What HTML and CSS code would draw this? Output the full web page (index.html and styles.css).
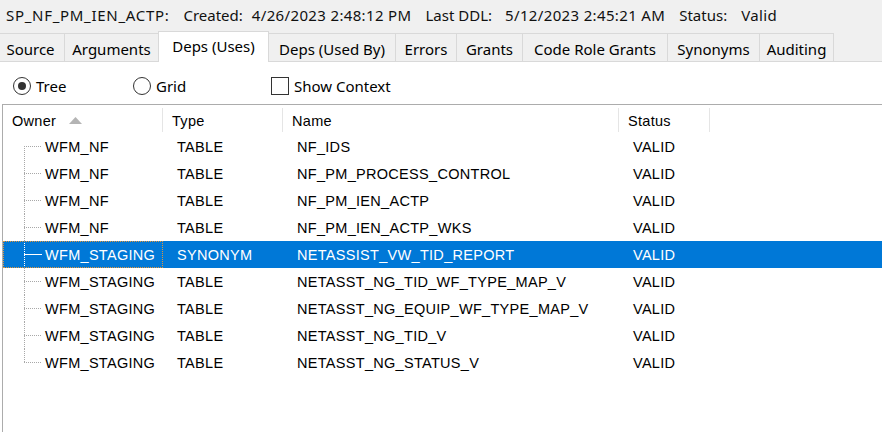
FILE: index.html
```html
<!DOCTYPE html>
<html>
<head>
<meta charset="utf-8">
<title>Deps</title>
<link rel="stylesheet" href="styles.css">
</head>
<body>
<div class="window">
  <div class="info">
    <span class="obj">SP_NF_PM_IEN_ACTP:</span>
    <span class="lbl lbl-created">Created:</span><span class="val">4/26/2023 2:48:12 PM</span>
    <span class="lbl lbl-ddl">Last DDL:</span><span class="val">5/12/2023 2:45:21 AM</span>
    <span class="lbl">Status:</span><span class="val">Valid</span>
  </div>
  <div class="tabs">
    <div class="tab t-source">Source</div>
    <div class="tab t-args">Arguments</div>
    <div class="tab t-uses active">Deps (Uses)</div>
    <div class="tab t-usedby">Deps (Used By)</div>
    <div class="tab t-errors">Errors</div>
    <div class="tab t-grants">Grants</div>
    <div class="tab t-crg">Code Role Grants</div>
    <div class="tab t-syn">Synonyms</div>
    <div class="tab t-aud">Auditing</div>
  </div>
  <div class="panel">
    <div class="options">
      <label class="opt opt-tree"><span class="radio checked"></span>Tree</label>
      <label class="opt opt-grid"><span class="radio"></span>Grid</label>
      <label class="opt"><span class="check"></span>Show Context</label>
    </div>
    <div class="grid">
      <div class="row head">
        <div class="c c-owner">Owner<svg class="sort" width="13" height="7" viewBox="0 0 13 7"><polygon points="0,7 6.5,0 13,7" fill="#b4b4b4"/></svg></div>
        <div class="c c-type">Type</div>
        <div class="c c-name">Name</div>
        <div class="c c-status">Status</div>
        <div class="c c-fill"></div>
      </div>
      <div class="row">
        <div class="c c-owner"><span class="tree first"></span><span class="txt">WFM_NF</span></div>
        <div class="c c-type">TABLE</div><div class="c c-name">NF_IDS</div><div class="c c-status">VALID</div><div class="c c-fill"></div>
      </div>
      <div class="row">
        <div class="c c-owner"><span class="tree"></span><span class="txt">WFM_NF</span></div>
        <div class="c c-type">TABLE</div><div class="c c-name">NF_PM_PROCESS_CONTROL</div><div class="c c-status">VALID</div><div class="c c-fill"></div>
      </div>
      <div class="row">
        <div class="c c-owner"><span class="tree"></span><span class="txt">WFM_NF</span></div>
        <div class="c c-type">TABLE</div><div class="c c-name">NF_PM_IEN_ACTP</div><div class="c c-status">VALID</div><div class="c c-fill"></div>
      </div>
      <div class="row">
        <div class="c c-owner"><span class="tree"></span><span class="txt">WFM_NF</span></div>
        <div class="c c-type">TABLE</div><div class="c c-name">NF_PM_IEN_ACTP_WKS</div><div class="c c-status">VALID</div><div class="c c-fill"></div>
      </div>
      <div class="row sel">
        <div class="c c-owner"><span class="tree"></span><span class="txt">WFM_STAGING</span></div>
        <div class="c c-type">SYNONYM</div><div class="c c-name">NETASSIST_VW_TID_REPORT</div><div class="c c-status">VALID</div><div class="c c-fill"></div>
      </div>
      <div class="row">
        <div class="c c-owner"><span class="tree"></span><span class="txt">WFM_STAGING</span></div>
        <div class="c c-type">TABLE</div><div class="c c-name">NETASST_NG_TID_WF_TYPE_MAP_V</div><div class="c c-status">VALID</div><div class="c c-fill"></div>
      </div>
      <div class="row">
        <div class="c c-owner"><span class="tree"></span><span class="txt">WFM_STAGING</span></div>
        <div class="c c-type">TABLE</div><div class="c c-name">NETASST_NG_EQUIP_WF_TYPE_MAP_V</div><div class="c c-status">VALID</div><div class="c c-fill"></div>
      </div>
      <div class="row">
        <div class="c c-owner"><span class="tree"></span><span class="txt">WFM_STAGING</span></div>
        <div class="c c-type">TABLE</div><div class="c c-name">NETASST_NG_TID_V</div><div class="c c-status">VALID</div><div class="c c-fill"></div>
      </div>
      <div class="row">
        <div class="c c-owner"><span class="tree last"></span><span class="txt">WFM_STAGING</span></div>
        <div class="c c-type">TABLE</div><div class="c c-name">NETASST_NG_STATUS_V</div><div class="c c-status">VALID</div><div class="c c-fill"></div>
      </div>
    </div>
  </div>
</div>
</body>
</html>
```

FILE: styles.css
```css
html, body {
  margin: 0;
  height: 100%;
  overflow: hidden;
  background: #fff;
}
body {
  font-family: "Noto Sans", "Open Sans", sans-serif;
  color: #000;
}
.window {
  width: 882px;
  height: 432px;
  display: flex;
  flex-direction: column;
}

/* info line */
.info {
  height: 31px;
  flex: none;
  background: #f0f0f0;
  display: flex;
  align-items: center;
  padding-left: 6px;
  gap: 14px;
  font-size: 15px;
  white-space: nowrap;
  padding-bottom: 1px;
  box-sizing: border-box;
  color: #111;
}
.info .obj { letter-spacing: 0.7px; }
.info .val { letter-spacing: 0.35px; }
.info .lbl-created { margin-right: -5px; }
.info .lbl-ddl { margin-right: -1px; }

/* tabs */
.tabs {
  height: 31px;
  flex: none;
  background: #f0f0f0;
  display: flex;
  align-items: flex-start;
  box-shadow: inset 0 -1px #d9d9d9;
  white-space: nowrap;
}
.tab {
  box-sizing: border-box;
  height: 28px;
  margin-top: 2px;
  margin-right: -1px;
  padding: 2px 0 0;
  border: 1px solid #d9d9d9;
  border-bottom: 0;
  display: flex;
  align-items: center;
  justify-content: center;
  font-size: 15px;
  color: #000;
  flex: none;
}
.t-source { width: 69px; margin-left: -4px; }
.t-args { width: 95px; }
.t-uses { width: 111px; }
.t-usedby { width: 128px; }
.t-errors { width: 62px; }
.t-grants { width: 67px; }
.t-crg { width: 146px; }
.t-syn { width: 93px; }
.t-aud { width: 75px; }
.tab.active {
  height: 31px;
  margin-top: 0;
  padding-top: 0;
  padding-bottom: 3px;
  background: #fff;
  position: relative;
  z-index: 1;
}

/* panel */
.panel {
  flex: 1;
  background: #fff;
  display: flex;
  flex-direction: column;
  min-height: 0;
}
.options {
  height: 42px;
  flex: none;
  box-sizing: border-box;
  padding: 6px 0 0 13px;
  display: flex;
  align-items: center;
  font-size: 15px;
}
.opt {
  display: flex;
  align-items: center;
  gap: 5px;
}
.opt-tree { width: 120px; }
.opt-grid { width: 138px; }
.radio {
  width: 18px;
  height: 18px;
  box-sizing: border-box;
  border: 1px solid #333;
  border-radius: 50%;
  display: flex;
  align-items: center;
  justify-content: center;
  background: #fff;
}
.radio.checked::after {
  content: "";
  width: 8px;
  height: 8px;
  border-radius: 50%;
  background: #333;
}
.check {
  width: 18px;
  height: 18px;
  box-sizing: border-box;
  border: 1px solid #333;
  background: #fff;
}

/* grid */
.grid {
  flex: 1;
  margin-left: 2px;
  border-left: 1px solid #acacac;
  border-top: 1px solid #acacac;
  font-family: "Liberation Sans", Arial, sans-serif;
  font-size: 14.5px;
  letter-spacing: 0.3px;
  overflow: hidden;
}
.row {
  display: flex;
  height: 27px;
  align-items: stretch;
}
.c {
  box-sizing: border-box;
  display: flex;
  align-items: center;
  white-space: nowrap;
  padding-left: 14px;
  flex: none;
}
.c-owner { width: 160px; padding-left: 0; }
.c-type { width: 120px; }
.c-name { width: 336px; }
.c-status { width: 91px; }
.c-fill { flex: 1; }

.row.head {
  height: 28px;
  padding-top: 3px;
  box-sizing: border-box;
}
.row.head .c {
  height: 24px;
  padding-left: 9px;
  padding-top: 1px;
  border-right: 1px solid #e5e5e5;
}
.row.head .c-fill { border-right: 0; }
.sort { margin-left: 13px; }

.tree {
  width: 18px;
  height: 27px;
  margin-left: 21px;
  margin-right: 3px;
  flex: none;
  background:
    repeating-linear-gradient(90deg, #a8a8a8 0 1px, transparent 1px 2px) 0 13px / 18px 1px no-repeat,
    repeating-linear-gradient(180deg, #a8a8a8 0 1px, transparent 1px 2px) 0 0 / 1px 100% no-repeat;
}
.tree.first {
  background:
    repeating-linear-gradient(90deg, #a8a8a8 0 1px, transparent 1px 2px) 0 13px / 18px 1px no-repeat,
    repeating-linear-gradient(180deg, #a8a8a8 0 1px, transparent 1px 2px) 0 13px / 1px 14px no-repeat;
}
.tree.last {
  background:
    repeating-linear-gradient(90deg, #a8a8a8 0 1px, transparent 1px 2px) 0 13px / 18px 1px no-repeat,
    repeating-linear-gradient(180deg, #a8a8a8 0 1px, transparent 1px 2px) 0 0 / 1px 14px no-repeat;
}

.row.sel {
  background: #0078d7;
  color: #fff;
}
.row.sel .c-owner {
  outline: 1px dotted #e0953a;
  outline-offset: -1px;
}
.row.sel .tree {
  background:
    linear-gradient(#fff, #fff) 0 13px / 18px 1px no-repeat,
    repeating-linear-gradient(180deg, #fff 0 1px, transparent 1px 2px) 0 0 / 1px 100% no-repeat;
}
```
